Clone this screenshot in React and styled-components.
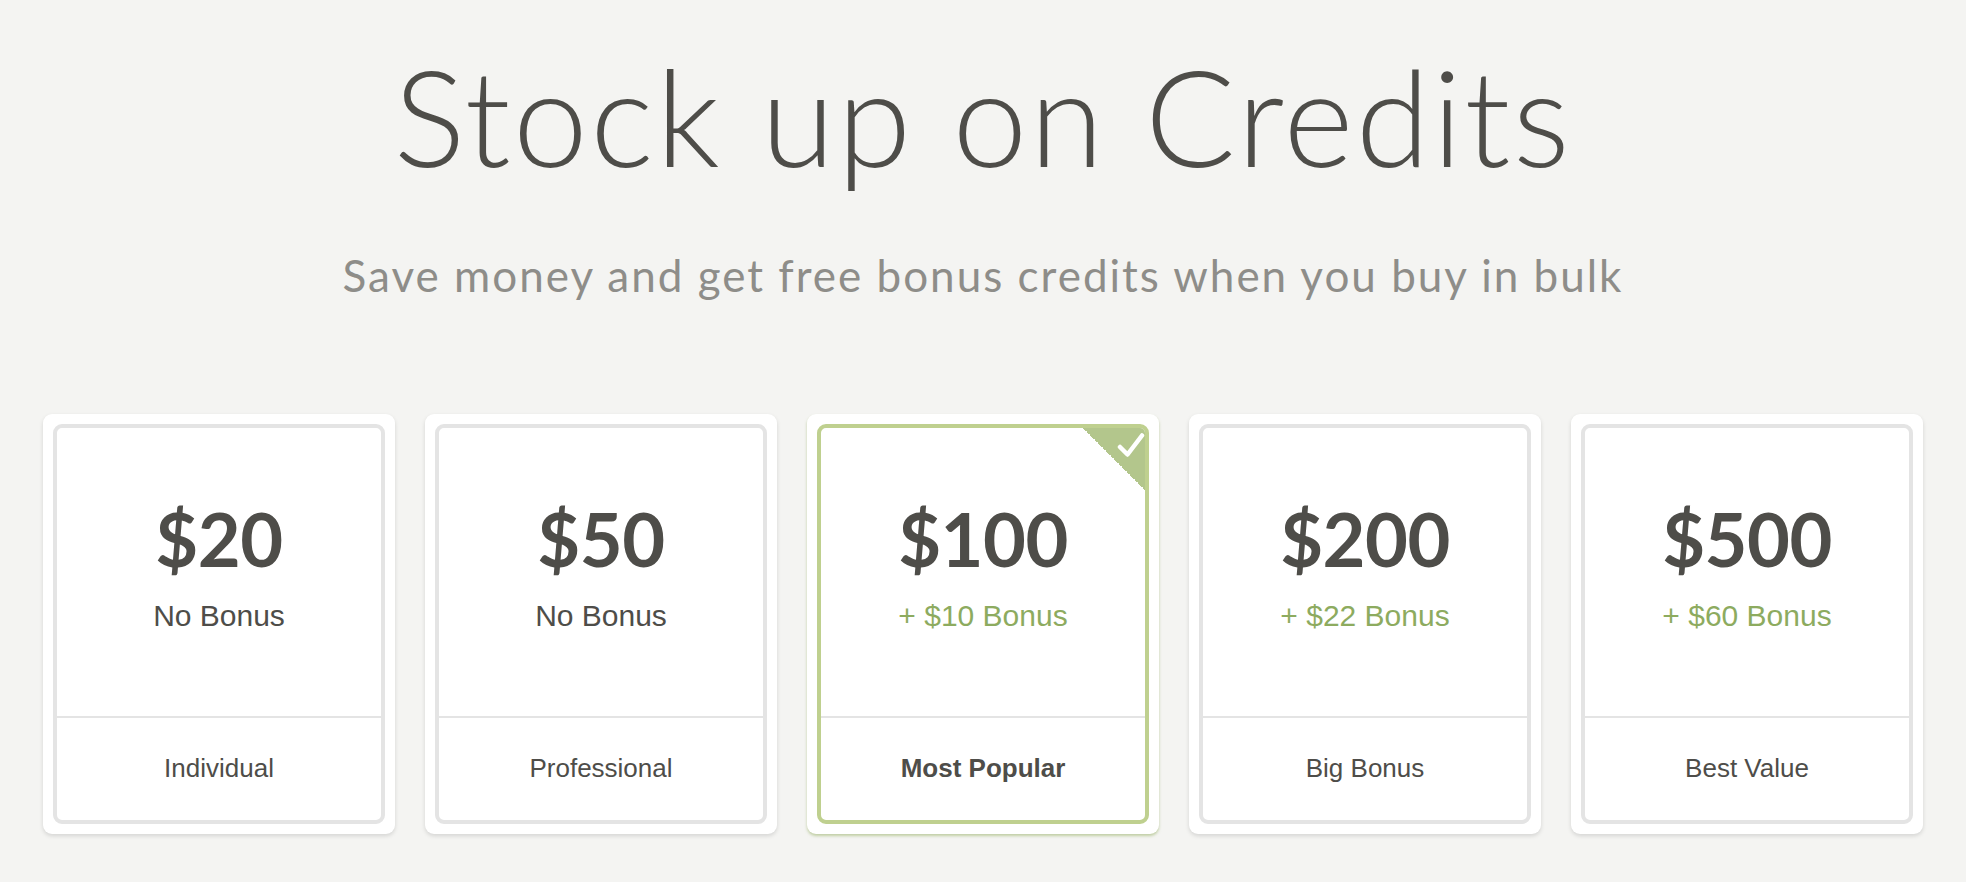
import React from "react";
import styled, { createGlobalStyle } from "styled-components";

const GlobalStyle = createGlobalStyle`
  html, body {
    margin: 0;
    padding: 0;
    background: #f4f4f2;
  }
  body {
    font-family: "Liberation Sans", Arial, sans-serif;
  }
`;

const Page = styled.main`
  display: flex;
  flex-direction: column;
  align-items: center;
  padding-top: 36px;
  min-height: 882px;
  box-sizing: border-box;
`;

const Title = styled.h1`
  margin: 0;
  font-family: "Lato", sans-serif;
  font-weight: 300;
  font-size: 134px;
  line-height: 1.2;
  letter-spacing: 2.5px;
  color: #4e4d49;
`;

const Subtitle = styled.p`
  margin: 52px 0 0;
  font-family: "Lato", sans-serif;
  font-weight: 400;
  font-size: 44px;
  line-height: 1.2;
  letter-spacing: 2px;
  color: #8e8d89;
`;

const CardRow = styled.section`
  display: flex;
  gap: 30px;
  margin-top: 112px;
`;

const Card = styled.div`
  width: 352px;
  height: 420px;
  box-sizing: border-box;
  padding: 10px;
  background: #fff;
  border-radius: 9px;
  box-shadow: ${(p) =>
    p.$selected
      ? "0 2px 3px rgba(150, 175, 100, 0.55)"
      : "0 2px 4px rgba(0, 0, 0, 0.13)"};
`;

const Inner = styled.div`
  position: relative;
  height: 100%;
  box-sizing: border-box;
  border: 4px solid ${(p) => (p.$selected ? "#bfd08f" : "#e4e4e4")};
  border-radius: 9px;
  display: flex;
  flex-direction: column;
  overflow: hidden;
`;

const Top = styled.div`
  height: 290px;
  display: flex;
  flex-direction: column;
  align-items: center;
  padding-top: 74px;
  box-sizing: border-box;
  border-bottom: 2px solid #e4e4e4;
`;

const Price = styled.div`
  font-family: "Lato", sans-serif;
  font-weight: 700;
  font-size: 74px;
  line-height: 1;
  letter-spacing: -0.5px;
  color: #4e4d49;
`;

const Bonus = styled.div`
  margin-top: 25px;
  font-size: 30px;
  line-height: 1;
  color: ${(p) => (p.$green ? "#8dab5f" : "#4e4d49")};
`;

const Footer = styled.div`
  flex: 1;
  display: flex;
  align-items: center;
  justify-content: center;
  font-size: 26px;
  font-weight: ${(p) => (p.$bold ? 700 : 400)};
  color: #4e4d49;
`;

const Corner = styled.div`
  position: absolute;
  top: -4px;
  right: -4px;
  width: 70px;
  height: 70px;
  background: linear-gradient(225deg, #b3c68c 50%, transparent 50%);
`;

const Check = styled.svg`
  position: absolute;
  top: 8px;
  right: 4px;
  width: 28px;
  height: 28px;
`;

const plans = [
  { price: "$20", bonus: "No Bonus", label: "Individual" },
  { price: "$50", bonus: "No Bonus", label: "Professional" },
  { price: "$100", bonus: "+ $10 Bonus", label: "Most Popular", green: true, selected: true },
  { price: "$200", bonus: "+ $22 Bonus", label: "Big Bonus", green: true },
  { price: "$500", bonus: "+ $60 Bonus", label: "Best Value", green: true },
];

export default function App() {
  return (
    <>
      <GlobalStyle />
      <Page>
        <Title>Stock up on Credits</Title>
        <Subtitle>Save money and get free bonus credits when you buy in bulk</Subtitle>
        <CardRow>
          {plans.map((p) => (
            <Card key={p.price} $selected={p.selected}>
              <Inner $selected={p.selected}>
                {p.selected && (
                  <Corner>
                    <Check viewBox="0 0 28 28" fill="none">
                      <path
                        d="M3 15 L10.5 22.5 L25 3.5"
                        stroke="#fff"
                        strokeWidth="4.5"
                        strokeLinecap="round"
                        strokeLinejoin="round"
                      />
                    </Check>
                  </Corner>
                )}
                <Top>
                  <Price>{p.price}</Price>
                  <Bonus $green={p.green}>{p.bonus}</Bonus>
                </Top>
                <Footer $bold={p.selected}>{p.label}</Footer>
              </Inner>
            </Card>
          ))}
        </CardRow>
      </Page>
    </>
  );
}
